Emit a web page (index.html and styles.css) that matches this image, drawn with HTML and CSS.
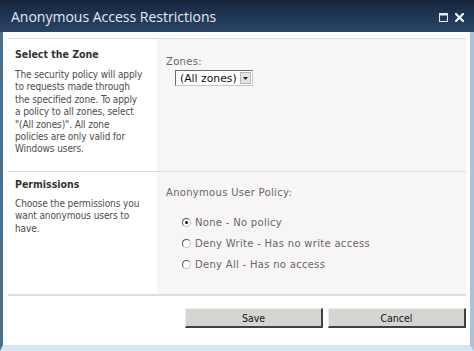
FILE: index.html
```html
<!DOCTYPE html>
<html>
<head>
<meta charset="utf-8">
<link rel="stylesheet" href="styles.css">
</head>
<body>
<div class="window">
  <div class="titlebar">
    <span class="title">Anonymous Access Restrictions</span>
    <div class="controls">
      <svg class="ico" width="9" height="9" viewBox="0 0 9 9"><rect x="0.5" y="0.5" width="8" height="8" fill="none" stroke="#e8edf3" stroke-width="1"/><rect x="0" y="0" width="9" height="2.5" fill="#e8edf3"/></svg>
      <svg class="ico" width="9" height="9" viewBox="0 0 9 9"><path d="M1 1 L8 8 M8 1 L1 8" stroke="#f2f5f8" stroke-width="2.2" stroke-linecap="square"/></svg>
    </div>
  </div>
  <div class="frame">
    <div class="sections">
      <div class="section s1">
        <div class="desc">
          <div class="head">Select the Zone</div>
          <div class="text">The security policy will apply<br>to requests made through<br>the specified zone. To apply<br>a policy to all zones, select<br>"(All zones)". All zone<br>policies are only valid for<br>Windows users.</div>
        </div>
        <div class="field">
          <div class="label">Zones:</div>
          <div class="select"><span class="sel-text">(All zones)</span><span class="sel-btn"><svg width="5" height="3" viewBox="0 0 5 3"><path d="M0 0 H5 L2.5 3 Z" fill="#222"/></svg></span></div>
        </div>
      </div>
      <div class="section s2">
        <div class="desc">
          <div class="head">Permissions</div>
          <div class="text">Choose the permissions you<br>want anonymous users to<br>have.</div>
        </div>
        <div class="field">
          <div class="label">Anonymous User Policy:</div>
          <div class="radios">
            <div class="radio"><span class="rb checked"></span>None - No policy</div>
            <div class="radio"><span class="rb"></span>Deny Write - Has no write access</div>
            <div class="radio"><span class="rb"></span>Deny All - Has no access</div>
          </div>
        </div>
      </div>
    </div>
    <div class="buttons">
      <div class="btn">Save</div>
      <div class="btn">Cancel</div>
    </div>
  </div>
</div>
</body>
</html>
```
FILE: styles.css
```css
html, body {
  margin: 0;
  padding: 0;
}
body {
  width: 474px;
  height: 351px;
  overflow: hidden;
  background: #4a7390;
}
.window {
  display: flex;
  flex-direction: column;
  height: 351px;
}
.titlebar {
  height: 32px;
  box-sizing: border-box;
  display: flex;
  align-items: center;
  padding: 1px 0 0 11px;
  background: linear-gradient(#16243a 0%, #1f3453 45%, #2b4566 100%);
}
.title {
  font-family: "Open Sans", "DejaVu Sans", sans-serif;
  font-size: 14px;
  color: #e4e9ef;
  flex: 1;
}
.controls {
  display: flex;
  gap: 7px;
  padding-right: 10px;
  padding-top: 1px;
}
.ico {
  display: block;
}
.frame {
  flex: 1;
  background: #ffffff;
  border-left: 3px solid #4a7390;
  border-right: 4px solid #a9c3d4;
  border-bottom: 6px solid #d5e8f2;
  padding: 6px 4px 0 5px;
  display: flex;
  flex-direction: column;
}
.sections {
  border-top: 1px solid #dadada;
  border-bottom: 2px solid #dedede;
}
.section {
  display: flex;
}
.s1 {
  height: 132px;
  border-bottom: 1px solid #dcdcdc;
}
.s2 {
  height: 122px;
}
.desc {
  flex: none;
  width: 142px;
  padding: 9px 0 0 7px;
  font-family: "DejaVu Sans Condensed", "DejaVu Sans", sans-serif;
  color: #4d4d4d;
  white-space: nowrap;
}
.head {
  font-weight: bold;
  font-size: 10.5px;
  color: #333;
  margin-bottom: 9px;
}
.s2 .desc {
  padding-top: 6px;
}
.s2 .head {
  margin-bottom: 8px;
}
.text {
  font-size: 10px;
  line-height: 12.4px;
  letter-spacing: -0.1px;
}
.field {
  flex: 1;
  background: #f8f5f7;
  padding: 17px 0 0 9px;
  font-family: "DejaVu Sans", sans-serif;
  font-size: 10px;
  color: #676767;
}
.s2 .field {
  padding-top: 15px;
}
.label {
  letter-spacing: 0.3px;
}
.select {
  margin: 3px 0 0 9px;
  width: 78px;
  height: 16px;
  box-sizing: border-box;
  border-top: 1px solid #6b6b6b;
  border-left: 1px solid #6b6b6b;
  border-right: 1px solid #c8c8c8;
  border-bottom: 1px solid #c8c8c8;
  background: #fff;
  display: flex;
  align-items: center;
  font-size: 10.8px;
  color: #111;
  white-space: nowrap;
}
.sel-text {
  flex: 1;
  padding-left: 4px;
}
.sel-btn {
  flex: none;
  width: 9px;
  height: 10px;
  margin-right: 1px;
  background: #e4e2de;
  border: 1px solid #b5b5b5;
  display: flex;
  align-items: center;
  justify-content: center;
}
.radios {
  margin: 17px 0 0 16px;
  display: flex;
  flex-direction: column;
  gap: 7px;
}
.radio {
  display: flex;
  align-items: center;
  height: 14px;
  letter-spacing: 0.3px;
}
.rb {
  width: 9px;
  height: 9px;
  border-radius: 50%;
  border: 1px solid #c8c8c8;
  border-top-color: #555;
  border-left-color: #555;
  background: #fff;
  margin-right: 4px;
  box-sizing: border-box;
  position: relative;
}
.rb.checked::after {
  content: "";
  position: absolute;
  left: 2px;
  top: 2px;
  width: 3px;
  height: 3px;
  border-radius: 50%;
  background: #111;
}
.buttons {
  display: flex;
  justify-content: flex-end;
  gap: 5px;
  margin-top: 12px;
}
.btn {
  width: 138px;
  height: 20px;
  box-sizing: border-box;
  background: #d6d4d0;
  border-top: 1px solid #f0f0f0;
  border-left: 1px solid #f0f0f0;
  border-right: 2px solid #404040;
  border-bottom: 2px solid #404040;
  display: flex;
  align-items: center;
  justify-content: center;
  font-family: "DejaVu Sans Condensed", "DejaVu Sans", sans-serif;
  font-size: 10.5px;
  color: #111;
}
```
